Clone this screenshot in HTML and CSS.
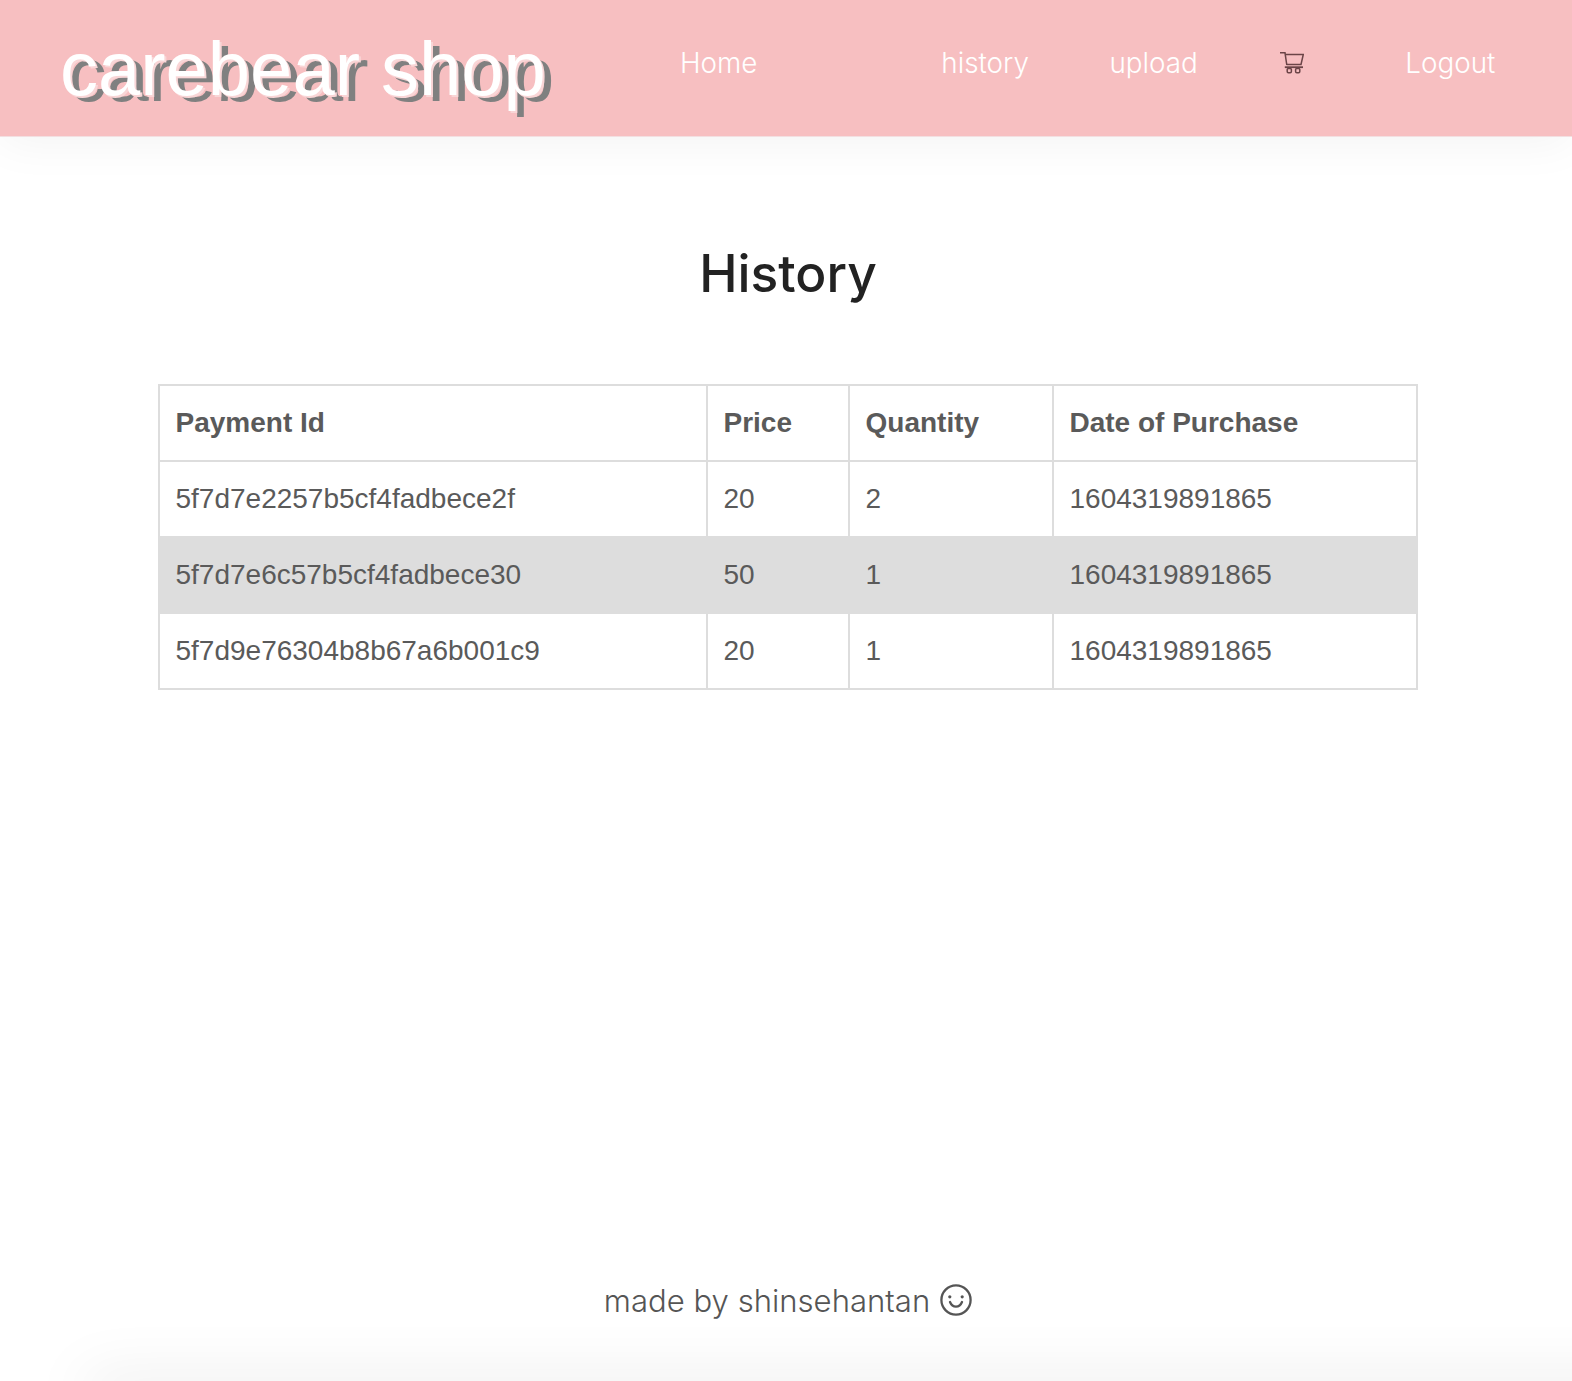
FILE: index.html
```html
<!DOCTYPE html>
<html lang="en">
<head>
<meta charset="utf-8">
<title>carebear shop</title>
<link rel="stylesheet" href="styles.css">
</head>
<body>
<div class="page">
  <header class="navbar">
    <a class="brand">carebear shop</a>
    <nav class="links">
      <a class="link link-home">Home</a>
      <a class="link link-history">history</a>
      <a class="link link-upload">upload</a>
      <a class="link link-cart" aria-label="cart">
        <svg class="cart" viewBox="0 0 24 22" width="24" height="22" fill="none" stroke="#6b4447" stroke-width="1.5">
          <path d="M0 .8H5L6.8 13"/>
          <path d="M5.3 2.5H23.3L21 12.5H6.6"/>
          <path d="M4.8 15.2H23" stroke-width="1.8"/>
          <rect x="7.2" y="16.4" width="4.2" height="4.4" rx="1.2"/>
          <rect x="15.6" y="16.4" width="4.2" height="4.4" rx="1.2"/>
        </svg>
      </a>
      <a class="link link-logout">Logout</a>
    </nav>
  </header>
  <main class="content">
    <h1 class="title">History</h1>
    <table class="history">
      <thead>
        <tr><th class="c-id">Payment Id</th><th class="c-price">Price</th><th class="c-qty">Quantity</th><th>Date of Purchase</th></tr>
      </thead>
      <tbody>
        <tr><td>5f7d7e2257b5cf4fadbece2f</td><td>20</td><td>2</td><td>1604319891865</td></tr>
        <tr class="alt"><td>5f7d7e6c57b5cf4fadbece30</td><td>50</td><td>1</td><td>1604319891865</td></tr>
        <tr><td>5f7d9e76304b8b67a6b001c9</td><td>20</td><td>1</td><td>1604319891865</td></tr>
      </tbody>
    </table>
  </main>
  <footer class="footer">
    <span class="credit">made by shinsehantan</span>
    <svg class="smile" viewBox="0 0 32 32" width="32" height="32" fill="none" stroke="#555" stroke-width="2.3">
      <circle cx="16" cy="16" r="14.6"/>
      <circle cx="9.8" cy="12.8" r="1.6" fill="#555" stroke="none"/>
      <circle cx="22.2" cy="12.8" r="1.6" fill="#555" stroke="none"/>
      <path d="M10 18c1.4 3.4 3.6 4.7 6 4.7s4.6-1.3 6-4.7" stroke-linecap="round"/>
    </svg>
  </footer>
</div>
</body>
</html>
```
FILE: styles.css
```css
* { box-sizing: border-box; }
html, body { margin: 0; background: #fff; }
.page {
  width: 1572px;
  height: 1381px;
  display: flex;
  flex-direction: column;
  overflow: hidden;
  font-family: Inter, "Liberation Sans", sans-serif;
}
.navbar {
  height: 137px;
  flex: none;
  display: flex;
  align-items: flex-start;
  background: #f7bfc1;
  border-bottom: 1px solid #f3dfe1;
  box-shadow: 0 5px 48px rgba(0, 0, 0, 0.05);
  position: relative;
}
.brand {
  margin: 15px 0 0 60px;
  font: 76px/108px "Liberation Sans", sans-serif;
  letter-spacing: 0;
  color: #fff;
  white-space: nowrap;
  text-shadow: 2px 2px 0 #f9d6d7, 8.5px 5.5px 0 #808080;
}
.links {
  flex: 1;
  display: flex;
  align-items: center;
  height: 125.5px;
}
.link {
  color: #fff;
  font-size: 27.8px;
  font-weight: 300;
  white-space: nowrap;
}
.link-home { margin-left: 134px; }
.link-history { margin-left: 184px; }
.link-upload { margin-left: 80.5px; }
.link-cart { margin-left: 82px; display: flex; padding-top: 1px; }
.link-logout { margin-left: 101.5px; }
.content {
  flex: 1;
  display: flex;
  flex-direction: column;
  align-items: center;
  padding-left: 4px;
}
.title {
  margin: 104px 0 0;
  height: 143px;
  font-size: 51.5px;
  line-height: 64px;
  font-weight: 500;
  color: #222;
}
.history {
  width: 1260px;
  border-collapse: collapse;
  table-layout: fixed;
  border: 2px solid #ddd;
  font: 28px/33px "Liberation Sans", sans-serif;
  color: #5a5a5a;
}
.c-id { width: 548px; }
.c-price { width: 142px; }
.c-qty { width: 204px; }
th, td {
  height: 76px;
  padding: 0 15px 2px 15.5px;
  text-align: left;
  border: 2px solid #ddd;
}
th { font-weight: 700; }
.alt { background: #ddd; }
.alt td { border-color: #ddd; }
.footer {
  height: 120px;
  flex: none;
  position: relative;
  display: flex;
  justify-content: center;
  align-items: flex-start;
  gap: 10px;
  padding: 21px 0 0 4px;
  font-size: 31.1px;
  line-height: 38px;
  font-weight: 300;
  color: #555;
}
.smile { margin-top: 2px; }
.footer::after {
  content: "";
  position: absolute;
  top: 120px;
  left: 85px;
  right: -200px;
  height: 20px;
  box-shadow: 0 0 60px rgba(0, 0, 0, 0.13);
}
```
